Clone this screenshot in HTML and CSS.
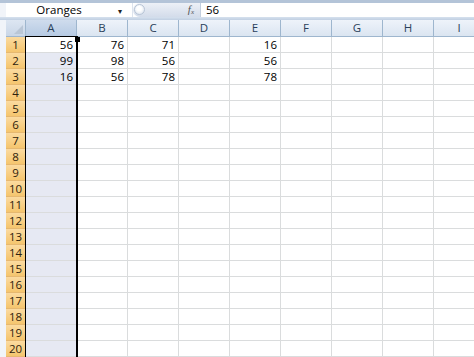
FILE: index.html
```html
<!DOCTYPE html>
<html>
<head>
<meta charset="utf-8">
<link rel="stylesheet" href="styles.css">
</head>
<body>
<div class="app">
  <div class="topband"></div>
  <div class="fbar">
    <div class="namebox">
      <span class="name">Oranges</span>
      <span class="drop">&#9662;</span>
    </div>
    <div class="pill">
      <span class="knob"></span>
      <span class="fx">f<sub>x</sub></span>
    </div>
    <div class="formula">56</div>
  </div>
  <div class="fline"></div>
  <div class="sheet">
    <div class="corner"><svg width="9" height="9" viewBox="0 0 9 9"><polygon points="9,0 9,9 0,9" fill="#b9c6d6"/></svg></div>
    <div class="ch active">A</div><div class="ch">B</div><div class="ch">C</div><div class="ch">D</div><div class="ch">E</div><div class="ch">F</div><div class="ch">G</div><div class="ch">H</div><div class="ch">I</div>

    <div class="rh">1</div><div class="c a1 num">56</div><div class="c num">76</div><div class="c num">71</div><div class="c"></div><div class="c num">16</div><div class="c"></div><div class="c"></div><div class="c"></div><div class="c"></div>
    <div class="rh">2</div><div class="c a num">99</div><div class="c num">98</div><div class="c num">56</div><div class="c"></div><div class="c num">56</div><div class="c"></div><div class="c"></div><div class="c"></div><div class="c"></div>
    <div class="rh">3</div><div class="c a num">16</div><div class="c num">56</div><div class="c num">78</div><div class="c"></div><div class="c num">78</div><div class="c"></div><div class="c"></div><div class="c"></div><div class="c"></div>
    <div class="rh">4</div><div class="c a"></div><div class="c"></div><div class="c"></div><div class="c"></div><div class="c"></div><div class="c"></div><div class="c"></div><div class="c"></div><div class="c"></div>
    <div class="rh">5</div><div class="c a"></div><div class="c"></div><div class="c"></div><div class="c"></div><div class="c"></div><div class="c"></div><div class="c"></div><div class="c"></div><div class="c"></div>
    <div class="rh">6</div><div class="c a"></div><div class="c"></div><div class="c"></div><div class="c"></div><div class="c"></div><div class="c"></div><div class="c"></div><div class="c"></div><div class="c"></div>
    <div class="rh">7</div><div class="c a"></div><div class="c"></div><div class="c"></div><div class="c"></div><div class="c"></div><div class="c"></div><div class="c"></div><div class="c"></div><div class="c"></div>
    <div class="rh">8</div><div class="c a"></div><div class="c"></div><div class="c"></div><div class="c"></div><div class="c"></div><div class="c"></div><div class="c"></div><div class="c"></div><div class="c"></div>
    <div class="rh">9</div><div class="c a"></div><div class="c"></div><div class="c"></div><div class="c"></div><div class="c"></div><div class="c"></div><div class="c"></div><div class="c"></div><div class="c"></div>
    <div class="rh">10</div><div class="c a"></div><div class="c"></div><div class="c"></div><div class="c"></div><div class="c"></div><div class="c"></div><div class="c"></div><div class="c"></div><div class="c"></div>
    <div class="rh">11</div><div class="c a"></div><div class="c"></div><div class="c"></div><div class="c"></div><div class="c"></div><div class="c"></div><div class="c"></div><div class="c"></div><div class="c"></div>
    <div class="rh">12</div><div class="c a"></div><div class="c"></div><div class="c"></div><div class="c"></div><div class="c"></div><div class="c"></div><div class="c"></div><div class="c"></div><div class="c"></div>
    <div class="rh">13</div><div class="c a"></div><div class="c"></div><div class="c"></div><div class="c"></div><div class="c"></div><div class="c"></div><div class="c"></div><div class="c"></div><div class="c"></div>
    <div class="rh">14</div><div class="c a"></div><div class="c"></div><div class="c"></div><div class="c"></div><div class="c"></div><div class="c"></div><div class="c"></div><div class="c"></div><div class="c"></div>
    <div class="rh">15</div><div class="c a"></div><div class="c"></div><div class="c"></div><div class="c"></div><div class="c"></div><div class="c"></div><div class="c"></div><div class="c"></div><div class="c"></div>
    <div class="rh">16</div><div class="c a"></div><div class="c"></div><div class="c"></div><div class="c"></div><div class="c"></div><div class="c"></div><div class="c"></div><div class="c"></div><div class="c"></div>
    <div class="rh">17</div><div class="c a"></div><div class="c"></div><div class="c"></div><div class="c"></div><div class="c"></div><div class="c"></div><div class="c"></div><div class="c"></div><div class="c"></div>
    <div class="rh">18</div><div class="c a"></div><div class="c"></div><div class="c"></div><div class="c"></div><div class="c"></div><div class="c"></div><div class="c"></div><div class="c"></div><div class="c"></div>
    <div class="rh">19</div><div class="c a"></div><div class="c"></div><div class="c"></div><div class="c"></div><div class="c"></div><div class="c"></div><div class="c"></div><div class="c"></div><div class="c"></div>
    <div class="rh">20</div><div class="c a"></div><div class="c"></div><div class="c"></div><div class="c"></div><div class="c"></div><div class="c"></div><div class="c"></div><div class="c"></div><div class="c"></div>

    <div class="selbox"><span class="handle"></span></div>
  </div>
</div>
</body>
</html>
```
FILE: styles.css
```css
html, body {
  margin: 0;
  padding: 0;
  overflow: hidden;
}
body {
  width: 474px;
  height: 357px;
  background: #f1f4f9;
  font-family: "Open Sans", "Liberation Sans", sans-serif;
  font-size: 11px;
  color: #000;
}
.app {
  display: flex;
  flex-direction: column;
}
.topband {
  height: 3px;
  background: #b4c4d8;
}
.fbar {
  height: 14px;
  display: flex;
  align-items: stretch;
  background: #fff;
  margin-left: 6px;
}
.namebox {
  width: 126px;
  display: flex;
  align-items: center;
  border-right: 1px solid #dde4ee;
}
.name {
  flex: 1;
  text-align: center;
  padding-right: 6px;
  line-height: 14px;
  font-size: 11.5px;
}
.drop {
  font-size: 8px;
  color: #222;
  width: 14px;
}
.pill {
  width: 68px;
  display: flex;
  align-items: center;
  justify-content: flex-end;
  background: linear-gradient(#edf1f7, #d3dcea);
  border-radius: 8px 0 0 8px;
  border-right: 1px solid #c3cfdf;
  padding-right: 6px;
  box-sizing: border-box;
  position: relative;
}
.knob {
  position: absolute;
  left: 1px;
  top: 1px;
  width: 11px;
  height: 11px;
  border-radius: 50%;
  border: 1px solid #b8c5d6;
  background: radial-gradient(circle at 45% 40%, #fff 30%, #dfe6f0 80%);
  box-sizing: border-box;
}
.fx {
  font-family: "Liberation Serif", serif;
  font-style: italic;
  font-size: 11px;
  color: #555;
  line-height: 14px;
}
.fx sub {
  font-size: 7px;
  vertical-align: -1px;
}
.formula {
  padding-left: 5px;
  line-height: 14px;
  font-size: 11.5px;
}
.fline {
  height: 3px;
  background: linear-gradient(#d6e1ee, #c0cfe2);
}
.sheet {
  position: relative;
  margin-left: 6px;
  display: grid;
  grid-template-columns: 20px repeat(9, 51px);
  grid-template-rows: 17px;
  grid-auto-rows: 16px;
  background: #fff;
}
.corner {
  background: linear-gradient(#dde6f2, #c9d6e7);
  border-right: 1px solid #9eb6ce;
  border-bottom: 1px solid #9eb6ce;
  box-sizing: border-box;
  display: flex;
  align-items: flex-end;
  justify-content: flex-end;
  padding: 0 2px 2px 0;
}
.corner svg { display: block; }
.ch {
  background: linear-gradient(#eef3fa, #dbe5f1);
  border-right: 1px solid #9eb6ce;
  border-bottom: 1px solid #9eb6ce;
  box-sizing: border-box;
  text-align: center;
  line-height: 16px;
  color: #2a3f5a;
  font-size: 11.5px;
}
.ch.active {
  background: linear-gradient(#cfdced, #b6cae3);
}
.rh {
  background: linear-gradient(#fbdba0, #f5c56e);
  border-right: 1px solid #d89c3c;
  border-bottom: 1px solid #e6b870;
  box-sizing: border-box;
  text-align: center;
  line-height: 15px;
  color: #2e220c;
  font-size: 11.5px;
}
.c {
  border-right: 1px solid #dadcdd;
  border-bottom: 1px solid #dadcdd;
  box-sizing: border-box;
  line-height: 15px;
  padding-right: 3px;
  font-size: 11.5px;
}
.c.num { text-align: right; }
.c.a { background: #e6e9f3; }
.c.a1 { background: #fff; }
.selbox {
  position: absolute;
  left: 19px;
  top: 16px;
  width: 53px;
  bottom: 0;
  border-top: 1px solid #000;
  border-left: 1px solid #000;
  border-right: 2px solid #000;
  box-sizing: border-box;
  pointer-events: none;
}
.handle {
  position: absolute;
  right: -4px;
  top: 0;
  width: 5px;
  height: 5px;
  background: #000;
}
```
